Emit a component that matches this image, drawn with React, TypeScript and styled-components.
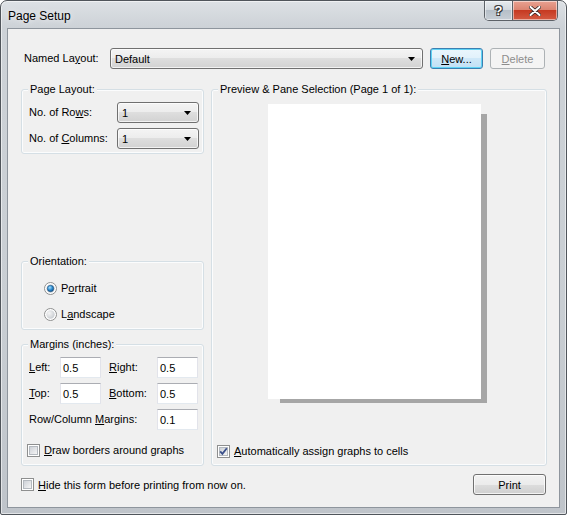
import React from 'react'
import styled, { createGlobalStyle } from 'styled-components'

const GlobalStyle = createGlobalStyle`
  html, body {
    margin: 0;
    padding: 0;
    background: #ffffff;
  }
  body {
    font-family: "Liberation Sans", Arial, sans-serif;
    font-size: 11px;
    color: #000;
  }
`

const Window = styled.div`
  width: 567px;
  height: 515px;
  box-sizing: border-box;
  border: 1px solid #50555b;
  border-radius: 7px 7px 2px 2px;
  background: linear-gradient(180deg, #dde1e5 0%, #cdd2d7 26px, #c9ced3 60%, #bfc4ca 100%);
  box-shadow: inset 0 0 0 1px rgba(255, 255, 255, 0.55);
  padding: 0 7px 7px 7px;
  display: flex;
  flex-direction: column;
`

const TitleBar = styled.div`
  height: 28px;
  display: flex;
  justify-content: space-between;
  align-items: flex-start;
`

const TitleText = styled.div`
  padding-top: 8px;
  font-size: 12px;
  line-height: 14px;
  color: #000;
  text-shadow: 0 0 6px rgba(255, 255, 255, 0.9);
`

const CaptionGroup = styled.div`
  display: flex;
  margin-right: 1px;
  height: 19px;
  border: 1px solid #5c6167;
  border-top: none;
  border-radius: 0 0 5px 5px;
  overflow: hidden;
`

const CaptionButton = styled.div<{ $close?: boolean }>`
  width: ${p => (p.$close ? 44 : 27)}px;
  display: flex;
  align-items: center;
  justify-content: center;
  background: ${p =>
    p.$close
      ? 'linear-gradient(180deg, #e9a292 0%, #dc8572 45%, #c63a22 50%, #d45a42 100%)'
      : 'linear-gradient(180deg, #e6eaee 0%, #d3d9df 45%, #b6bfc8 50%, #c7ced5 100%)'};
  border-left: ${p => (p.$close ? '1px solid #5c6167' : 'none')};
  box-shadow: inset 0 0 0 1px rgba(255, 255, 255, 0.5);
  color: #fff;
  font-weight: bold;
  font-size: 13px;
  text-shadow: 0 0 1px #222, 1px 1px 0 #333, -1px -1px 0 #444, 1px -1px 0 #444, -1px 1px 0 #444;
`

const Client = styled.div`
  flex: 1;
  background: #f0f0f0;
  box-shadow: 0 0 0 1px #8e959d;
  display: flex;
  flex-direction: column;
`

const TopRow = styled.div`
  display: flex;
  align-items: center;
  padding: 19px 0 0 16px;
  height: 21px;
`

const Label = styled.span<{ $width?: number }>`
  display: inline-block;
  width: ${p => (p.$width ? `${p.$width}px` : 'auto')};
  white-space: nowrap;
  line-height: 13px;
`

const Key = styled.u`
  text-decoration: underline;
  text-underline-offset: 1px;
`

const Combo = styled.div<{ $width: number }>`
  position: relative;
  width: ${p => p.$width}px;
  height: 21px;
  box-sizing: border-box;
  border: 1px solid #707070;
  border-radius: 3px;
  background: linear-gradient(180deg, #f4f4f4 0%, #ececec 50%, #dedede 50%, #d2d2d2 100%);
  box-shadow: inset 0 0 0 1px rgba(255, 255, 255, 0.7);
  display: flex;
  align-items: center;
  padding-left: 4px;
`

const ComboArrow = styled.svg`
  position: absolute;
  right: 7px;
  top: 8px;
`

const Button = styled.div<{ $width: number; $variant?: 'default' | 'disabled' }>`
  width: ${p => p.$width}px;
  height: 21px;
  box-sizing: border-box;
  margin-left: 7px;
  border-radius: 3px;
  display: flex;
  align-items: center;
  justify-content: center;
  border: 1px solid
    ${p => (p.$variant === 'default' ? '#3c7fb1' : p.$variant === 'disabled' ? '#adb2b5' : '#707070')};
  color: ${p => (p.$variant === 'disabled' ? '#8d8d8d' : '#000')};
  background: ${p =>
    p.$variant === 'disabled'
      ? '#f4f4f4'
      : p.$variant === 'default'
        ? 'linear-gradient(180deg, #eaf6fd 0%, #e1f1fb 50%, #cfe8f8 50%, #c2e0f5 100%)'
        : 'linear-gradient(180deg, #f2f2f2 0%, #ebebeb 50%, #dddddd 50%, #cfcfcf 100%)'};
  box-shadow: inset 0 0 0 1px
    ${p => (p.$variant === 'default' ? '#5fd3f5' : p.$variant === 'disabled' ? '#f4f4f4' : 'rgba(255,255,255,0.75)')};
`

const Main = styled.div`
  display: grid;
  grid-template-columns: 183px 336px;
  column-gap: 7px;
  margin: 20px 0 0 13px;
  height: 377px;
`

const LeftColumn = styled.div`
  display: flex;
  flex-direction: column;
`

const Group = styled.div<{ $height?: number; $gapAbove?: number }>`
  position: relative;
  box-sizing: border-box;
  height: ${p => (p.$height ? `${p.$height}px` : '100%')};
  margin-top: ${p => (p.$gapAbove === undefined ? '0' : p.$gapAbove < 0 ? 'auto' : `${p.$gapAbove}px`)};
  border: 1px solid #d5dfe5;
  border-radius: 3px;
  box-shadow: inset 0 0 0 1px #fbfcfd;
`

const Legend = styled.span`
  position: absolute;
  top: -7px;
  left: 6px;
  padding: 0 2px;
  background: #f0f0f0;
  line-height: 13px;
  white-space: nowrap;
`

const LayoutGrid = styled.div`
  display: grid;
  grid-template-columns: 88px 82px;
  row-gap: 5px;
  align-items: center;
  padding: 12px 0 0 7px;
`

const RadioList = styled.div`
  display: flex;
  flex-direction: column;
  gap: 10px;
  padding: 18px 0 0 22px;
`

const OptionRow = styled.label<{ $offset?: number }>`
  display: flex;
  align-items: center;
  gap: 4px;
  height: 16px;
  margin-left: ${p => p.$offset ?? 0}px;
`

const MarginGrid = styled.div`
  display: grid;
  grid-template-columns: 31px 41px 56px 41px;
  grid-auto-rows: 21px;
  row-gap: 5px;
  align-items: center;
  padding: 12px 0 0 7px;
`

const SideLabel = styled(Label)`
  padding-left: 8px;
`

const WideLabel = styled(Label)`
  grid-column: 1 / 4;
`

const TextInput = styled.div`
  height: 21px;
  box-sizing: border-box;
  border: 1px solid #e2e3ea;
  border-top-color: #abadb3;
  border-bottom-color: #e3e9ef;
  background: #fff;
  display: flex;
  align-items: center;
  padding-left: 2px;
`

const CheckRow = styled(OptionRow)`
  margin-top: 12px;
`

const PreviewBody = styled.div`
  height: 100%;
  display: flex;
  flex-direction: column;
  padding: 14px 0 6px 5px;
  box-sizing: border-box;
`

const Page = styled.div`
  width: 213px;
  height: 295px;
  margin-left: 51px;
  background: #ffffff;
  box-shadow: 9px 7px 0 -3px #a6a6a6;
`

const PreviewCheck = styled(OptionRow)`
  margin-top: auto;
`

const BottomRow = styled.div`
  display: flex;
  align-items: center;
  justify-content: space-between;
  margin-top: 8px;
  padding: 0 13px;
  height: 21px;
`

const PrintButton = styled(Button)`
  margin-left: 0;
`

const Checkbox: React.FC<{ checked?: boolean }> = ({ checked }) => (
  <svg width="13" height="13" viewBox="0 0 13 13">
    <defs>
      <linearGradient id="cbFill" x1="0" y1="0" x2="1" y2="1">
        <stop offset="0" stopColor="#cbcfd5" />
        <stop offset="1" stopColor="#f7f7f7" />
      </linearGradient>
    </defs>
    <rect x="0.5" y="0.5" width="12" height="12" fill="#fff" stroke="#8e8f8f" />
    <rect x="2.5" y="2.5" width="8" height="8" fill="url(#cbFill)" stroke="#b4b9bf" />
    {checked && (
      <path d="M3.2 6.4 L5.4 8.8 L9.8 3.2" fill="none" stroke="#3a4f8a" strokeWidth="1.8" />
    )}
  </svg>
)

const Radio: React.FC<{ checked?: boolean }> = ({ checked }) => (
  <svg width="13" height="13" viewBox="0 0 13 13">
    <defs>
      <radialGradient id="rbOff" cx="0.35" cy="0.35" r="0.7">
        <stop offset="0" stopColor="#f6f6f6" />
        <stop offset="1" stopColor="#c9cdd2" />
      </radialGradient>
      <radialGradient id="rbOn" cx="0.4" cy="0.35" r="0.65">
        <stop offset="0" stopColor="#a8e0fb" />
        <stop offset="0.6" stopColor="#2b8ad0" />
        <stop offset="1" stopColor="#145a96" />
      </radialGradient>
    </defs>
    <circle cx="6.5" cy="6.5" r="6" fill="#fff" stroke="#8e8f8f" />
    <circle cx="6.5" cy="6.5" r="4.2" fill="url(#rbOff)" />
    {checked && <circle cx="6.5" cy="6.5" r="3.2" fill="url(#rbOn)" stroke="#1d4f7a" strokeWidth="0.6" />}
  </svg>
)

const Arrow: React.FC = () => (
  <ComboArrow width="7" height="4" viewBox="0 0 7 4">
    <path d="M0 0 H7 L3.5 4 Z" fill="#000" />
  </ComboArrow>
)

const App: React.FC = () => {
  return (
    <>
      <GlobalStyle />
      <Window>
        <TitleBar>
          <TitleText>Page Setup</TitleText>
          <CaptionGroup>
            <CaptionButton>?</CaptionButton>
            <CaptionButton $close>
              <svg width="12" height="10" viewBox="0 0 12 10">
                <path d="M1.5 1 L10.5 9 M10.5 1 L1.5 9" stroke="#3a2a28" strokeWidth="3.6" strokeLinecap="round" />
                <path d="M1.5 1 L10.5 9 M10.5 1 L1.5 9" stroke="#fff" strokeWidth="2" strokeLinecap="round" />
              </svg>
            </CaptionButton>
          </CaptionGroup>
        </TitleBar>

        <Client>
          <TopRow>
            <Label $width={86}>
              Named La<Key>y</Key>out:
            </Label>
            <Combo $width={313}>
              Default
              <Arrow />
            </Combo>
            <Button $width={53} $variant="default">
              <span>
                <Key>N</Key>ew...
              </span>
            </Button>
            <Button $width={55} $variant="disabled">
              <span>
                <Key>D</Key>elete
              </span>
            </Button>
          </TopRow>

          <Main>
            <LeftColumn>
              <Group $height={65}>
                <Legend>Page Layout:</Legend>
                <LayoutGrid>
                  <Label>
                    No. of Ro<Key>w</Key>s:
                  </Label>
                  <Combo $width={82}>
                    1
                    <Arrow />
                  </Combo>
                  <Label>
                    No. of <Key>C</Key>olumns:
                  </Label>
                  <Combo $width={82}>
                    1
                    <Arrow />
                  </Combo>
                </LayoutGrid>
              </Group>

              <Group $height={69} $gapAbove={-1}>
                <Legend>Orientation:</Legend>
                <RadioList>
                  <OptionRow>
                    <Radio checked />
                    <span>
                      P<Key>o</Key>rtrait
                    </span>
                  </OptionRow>
                  <OptionRow>
                    <Radio />
                    <span>
                      L<Key>a</Key>ndscape
                    </span>
                  </OptionRow>
                </RadioList>
              </Group>

              <Group $height={122} $gapAbove={14}>
                <Legend>Margins (inches):</Legend>
                <MarginGrid>
                  <Label>
                    <Key>L</Key>eft:
                  </Label>
                  <TextInput>0.5</TextInput>
                  <SideLabel>
                    <Key>R</Key>ight:
                  </SideLabel>
                  <TextInput>0.5</TextInput>
                  <Label>
                    <Key>T</Key>op:
                  </Label>
                  <TextInput>0.5</TextInput>
                  <SideLabel>
                    <Key>B</Key>ottom:
                  </SideLabel>
                  <TextInput>0.5</TextInput>
                  <WideLabel>
                    Row/Column <Key>M</Key>argins:
                  </WideLabel>
                  <TextInput>0.1</TextInput>
                </MarginGrid>
                <CheckRow $offset={5}>
                  <Checkbox />
                  <span>
                    <Key>D</Key>raw borders around graphs
                  </span>
                </CheckRow>
              </Group>
            </LeftColumn>

            <Group>
              <Legend>Preview &amp; Pane Selection (Page 1 of 1):</Legend>
              <PreviewBody>
                <Page />
                <PreviewCheck>
                  <Checkbox checked />
                  <span>
                    <Key>A</Key>utomatically assign graphs to cells
                  </span>
                </PreviewCheck>
              </PreviewBody>
            </Group>
          </Main>

          <BottomRow>
            <OptionRow>
              <Checkbox />
              <span>
                <Key>H</Key>ide this form before printing from now on.
              </span>
            </OptionRow>
            <PrintButton $width={73}>Print</PrintButton>
          </BottomRow>
        </Client>
      </Window>
    </>
  )
}

export default App
